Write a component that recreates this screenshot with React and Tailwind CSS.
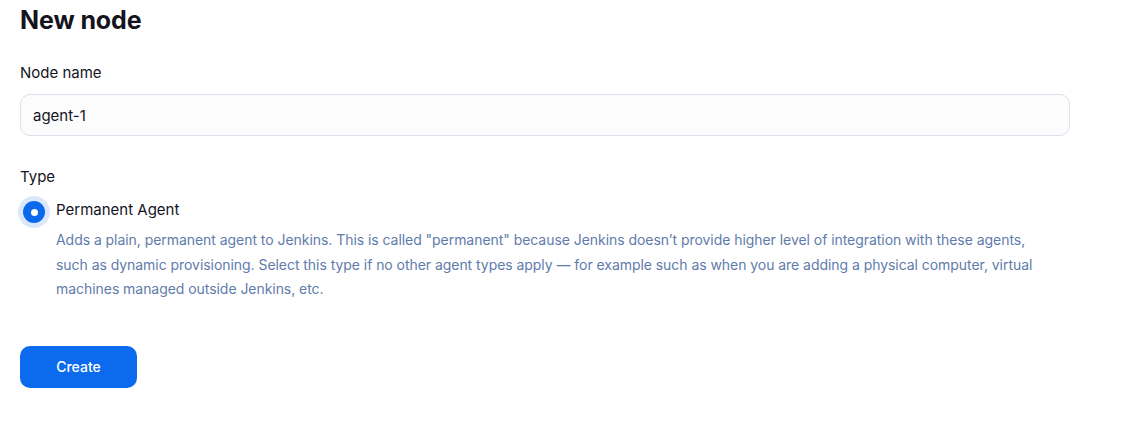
export default function App() {
  return (
    <div
      className="min-h-screen bg-white px-5 pt-[4px] text-[#14141f]"
      style={{ fontFamily: 'Inter, "Noto Sans", sans-serif' }}
    >
      <h1 className="text-[25px] font-bold leading-[32px] tracking-[-0.1px]">New node</h1>

      <div className="mt-[27px] w-[1050px]">
        <label className="block text-[15px] leading-[20px]">Node name</label>
        <input
          defaultValue="agent-1"
          className="mt-[11px] h-[42px] w-full rounded-[10px] border border-[#dbe0ec] bg-[#fcfcfd] px-3 text-[15px] text-[#14141f] outline-none"
        />
      </div>

      <div className="mt-[31px] w-[1050px]">
        <div className="text-[15px] leading-[20px]">Type</div>
        <div className="mt-[12px] flex items-start gap-[6px]">
          {/* radio */}
          <div className="mt-[-3px] ml-[-2px] flex h-[32px] w-[32px] shrink-0 items-center justify-center rounded-full bg-[#dbe7fc]">
            <div className="flex h-[22px] w-[22px] items-center justify-center rounded-full bg-[#0b6aec]">
              <div className="h-[7px] w-[7px] rounded-full bg-white" />
            </div>
          </div>
          <div className="w-[990px]">
            <div className="text-[15px] leading-[22px]">Permanent Agent</div>
            <p className="mt-[7px] text-[14px] leading-[24.5px] tracking-[-0.05px] text-[#5f7bab]">
              Adds a plain, permanent agent to Jenkins. This is called "permanent" because Jenkins doesn’t provide higher level of integration with these agents, such as dynamic provisioning. Select this type if no other agent types apply — for example such as when you are adding a physical computer, virtual machines managed outside Jenkins, etc.
            </p>
          </div>
        </div>
      </div>

      <button className="mt-[44px] h-[42px] w-[117px] rounded-[10px] bg-[#0b6aee] text-[14px] font-medium text-white">
        Create
      </button>
    </div>
  );
}
